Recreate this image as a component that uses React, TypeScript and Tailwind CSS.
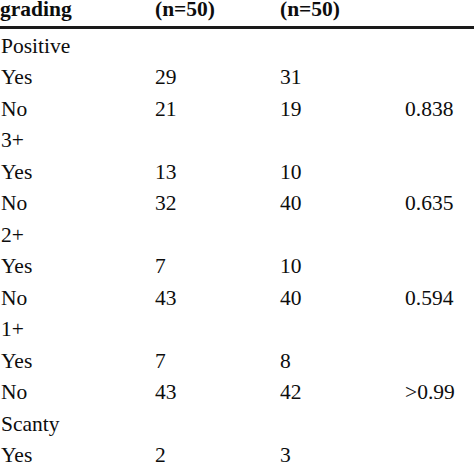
export default function App() {
  const rows = [
    ["Positive", "", "", ""],
    ["Yes", "29", "31", ""],
    ["No", "21", "19", "0.838"],
    ["3+", "", "", ""],
    ["Yes", "13", "10", ""],
    ["No", "32", "40", "0.635"],
    ["2+", "", "", ""],
    ["Yes", "7", "10", ""],
    ["No", "43", "40", "0.594"],
    ["1+", "", "", ""],
    ["Yes", "7", "8", ""],
    ["No", "43", "42", ">0.99"],
    ["Scanty", "", "", ""],
    ["Yes", "2", "3", ""],
  ]

  return (
    <div className="w-[474px] h-[474px] overflow-hidden bg-white text-[#0d0d0d] font-['Liberation_Serif',serif] text-[21.5px] leading-[31.5px]">
      <div className="grid grid-cols-[155px_125px_124px_1fr] -mt-[6px] font-bold">
        <div>grading</div>
        <div>(n=50)</div>
        <div>(n=50)</div>
        <div></div>
      </div>
      <div className="h-[3px] bg-[#1a1a1a] mb-[2px]" />
      {rows.map((r, i) => (
        <div key={i} className="grid grid-cols-[155px_125px_124px_1fr]">
          <div className="pl-px">{r[0]}</div>
          <div>{r[1]}</div>
          <div>{r[2]}</div>
          <div className="pl-px">{r[3]}</div>
        </div>
      ))}
    </div>
  )
}
